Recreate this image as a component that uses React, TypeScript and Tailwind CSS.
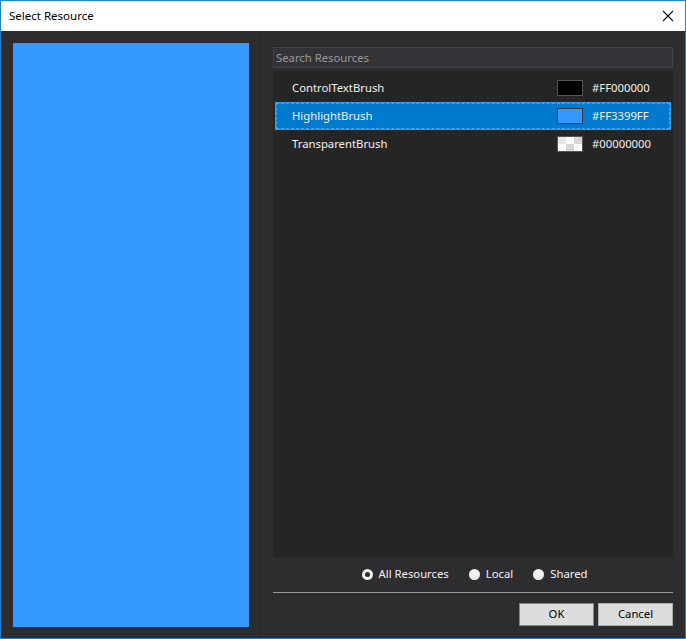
import { useState } from "react";

type Resource = {
  name: string;
  value: string;
  swatch: "black" | "blue" | "transparent";
};

const resources: Resource[] = [
  { name: "ControlTextBrush", value: "#FF000000", swatch: "black" },
  { name: "HighlightBrush", value: "#FF3399FF", swatch: "blue" },
  { name: "TransparentBrush", value: "#00000000", swatch: "transparent" },
];

const scopes = ["All Resources", "Local", "Shared"];

function Swatch({ kind, selected }: { kind: Resource["swatch"]; selected: boolean }) {
  if (kind === "transparent") {
    return (
      <div className="grid h-[16px] w-[26px] grid-cols-3 grid-rows-2 border border-[#555555]">
        <div className="bg-[#e8e8e8]" />
        <div className="bg-white" />
        <div className="bg-[#d6d6d6]" />
        <div className="bg-white" />
        <div className="bg-[#d6d6d6]" />
        <div className="bg-white" />
      </div>
    );
  }
  return (
    <div
      className={
        kind === "black"
          ? "h-[16px] w-[26px] border border-[#555555] bg-black"
          : `h-[16px] w-[26px] border bg-[#3399ff] ${selected ? "border-[#3a3a3a]" : "border-[#555555]"}`
      }
    />
  );
}

function Radio({ label, checked, onClick }: { label: string; checked: boolean; onClick: () => void }) {
  return (
    <button type="button" onClick={onClick} className="flex items-center gap-[6px] text-[11.3px] text-[#f1f1f1]">
      {checked ? (
        <span className="flex h-[11px] w-[11px] items-center justify-center rounded-full bg-[#f1f1f1]">
          <span className="h-[5px] w-[5px] rounded-full bg-[#2d2d30]" />
        </span>
      ) : (
        <span className="h-[11px] w-[11px] rounded-full bg-[#f1f1f1]" />
      )}
      {label}
    </button>
  );
}

export default function App() {
  const [selected, setSelected] = useState(1);
  const [scope, setScope] = useState(0);
  const [query, setQuery] = useState("");

  const visible = resources.filter((r) => r.name.toLowerCase().includes(query.toLowerCase()));

  return (
    <div
      className="flex h-[639px] w-[686px] flex-col border border-[#1883d7] bg-[#2d2d30]"
      style={{ fontFamily: '"Noto Sans", "Open Sans", sans-serif' }}
    >
      {/* title bar */}
      <div className="flex h-[30px] shrink-0 items-center justify-between bg-white pl-[8px] pr-[10px]">
        <span className="text-[11.5px] text-black">Select Resource</span>
        <svg width="12" height="12" viewBox="0 0 12 12" className="mr-[1px]">
          <path d="M1 1 L11 11 M11 1 L1 11" stroke="#111" strokeWidth="1.1" />
        </svg>
      </div>

      <div className="flex min-h-0 flex-1">
        {/* preview */}
        <div className="w-[259px] shrink-0 pb-[11px] pl-[12px] pr-[11px] pt-[12px]">
          <div className="h-full w-full bg-[#3399ff]" />
        </div>
        <div className="w-px shrink-0 bg-[#262628]" />

        {/* resources */}
        <div className="flex min-w-0 flex-1 flex-col px-[12px] pb-[12px] pt-[16px]">
          <input
            value={query}
            onChange={(event) => setQuery(event.target.value)}
            placeholder="Search Resources"
            className="h-[21px] w-full border border-[#434346] bg-[#333337] px-[2px] text-[11.3px] text-[#f1f1f1] outline-none placeholder:text-[#999999]"
          />

          <div className="mt-[3px] flex-1 bg-[#252526] px-[2px] py-[3px]">
            {visible.map((item) => {
              const index = resources.indexOf(item);
              const isSelected = index === selected;
              return (
                <div
                  key={item.name}
                  onClick={() => setSelected(index)}
                  className={`flex h-[28px] items-center border ${
                    isSelected ? "border-[#3399ff] bg-[#007acc]" : "border-transparent"
                  }`}
                >
                  <div
                    className={`flex h-full w-full items-center border border-dashed pl-[15px] ${
                      isSelected ? "border-[#4aa3e8]" : "border-transparent"
                    }`}
                  >
                    <span className="flex-1 text-[11.3px] text-[#f1f1f1]">{item.name}</span>
                    <Swatch kind={item.swatch} selected={isSelected} />
                    <span className="w-[86px] pl-[9px] text-[11.3px] text-[#f1f1f1]">{item.value}</span>
                  </div>
                </div>
              );
            })}
          </div>

          <div className="flex h-[35px] items-center justify-center gap-[20px] pl-[3px]">
            {scopes.map((label, i) => (
              <Radio key={label} label={label} checked={scope === i} onClick={() => setScope(i)} />
            ))}
          </div>

          <div className="h-px bg-[#999999]" />

          <div className="mt-[10px] flex justify-end gap-[4px]">
            <button
              type="button"
              className="h-[23px] w-[75px] border border-[#3399ff] bg-[#dddddd] text-[11.3px] text-black"
            >
              OK
            </button>
            <button
              type="button"
              className="h-[23px] w-[75px] border border-[#adadad] bg-[#dddddd] text-[11.3px] text-black"
            >
              Cancel
            </button>
          </div>
        </div>
      </div>
    </div>
  );
}
